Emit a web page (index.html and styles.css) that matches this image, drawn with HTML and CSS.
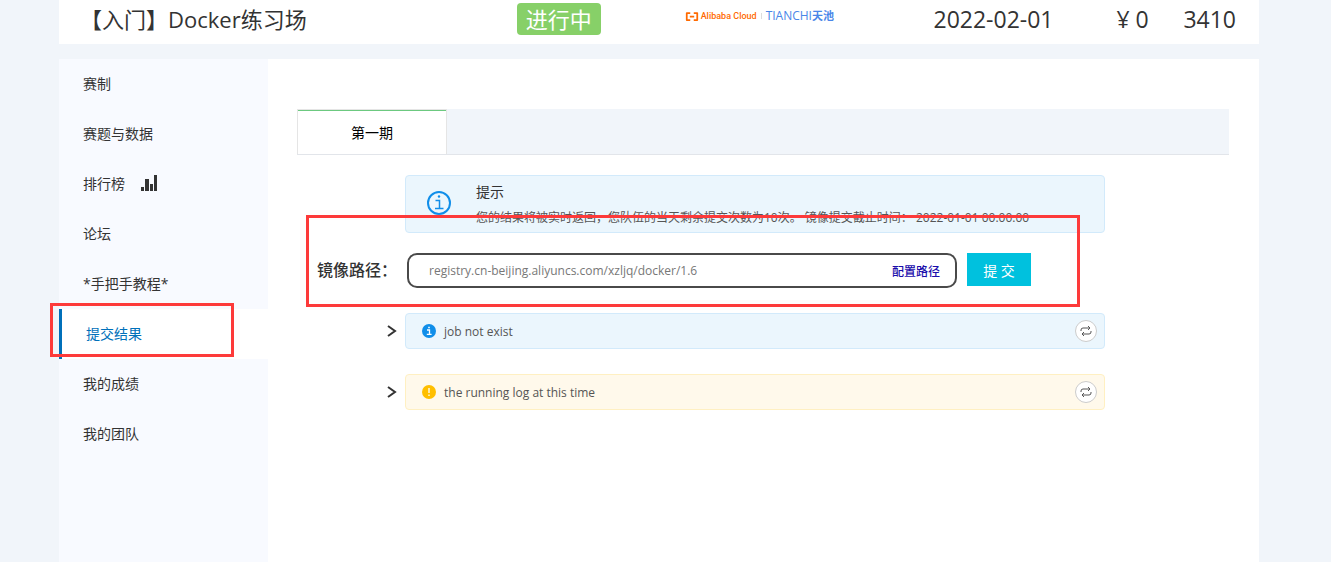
FILE: index.html
```html
<!DOCTYPE html>
<html lang="zh-CN">
  <head>
    <meta charset="UTF-8" />
    <meta name="viewport" content="width=device-width, initial-scale=1.0" />
    <title>【入门】Docker练习场</title>
    <link rel="stylesheet" href="styles.css">
  </head>
  <body>
    <header class="header">
      <h1>【入门】Docker练习场</h1>
      <span class="badge">进行中</span>
      <div class="logos">
        <svg class="logo-mark" viewBox="0 0 16 10" width="14" height="9" aria-hidden="true">
          <path d="M6 1H2v8h4M10 1h4v8h-4M5.500 5h5" fill="none" stroke="#ff6a00" stroke-width="2" stroke-linejoin="round" />
        </svg>
        <span class="logo-alibaba">Alibaba Cloud</span>
        <span class="logo-divider"></span>
        <span class="logo-tianchi">TIANCHI<b>天池</b></span>
      </div>
      <span class="figure">2022-02-01</span>
      <span class="figure">¥ 0</span>
      <span class="figure">3410</span>
    </header>

    <div class="page">
      <nav class="sidebar">
        <a href="#">赛制</a>
        <a href="#">赛题与数据</a>
        <a href="#">
          排行榜
          <svg class="rank-icon" viewBox="0 0 16 16" width="16" height="16" fill="#333" aria-hidden="true">
            <path d="M0 12h3v4H0zM4 4h4v12H4zM9 9h3v7H9zM13 0h3v16h-3z" />
          </svg>
        </a>
        <a href="#">论坛</a>
        <a href="#">*手把手教程*</a>
        <a href="#" class="active">提交结果<span class="mark mark-nav"></span></a>
        <a href="#">我的成绩</a>
        <a href="#">我的团队</a>
      </nav>

      <main class="content">
        <div class="tabs">
          <button type="button" class="tab">第一期</button>
        </div>

        <div class="tip">
          <svg class="tip-icon" viewBox="0 0 26 26" width="26" height="26" fill="none" stroke="#108ee9" stroke-width="2" aria-hidden="true">
            <circle cx="13" cy="13" r="11" />
            <path d="M9.500 10.500h4v8M9 18.500h8.500" stroke-width="1.500" />
            <circle cx="13" cy="6.500" r="1.200" fill="#108ee9" stroke="none" />
          </svg>
          <div>
            <h2>提示</h2>
            <p>您的结果将被实时返回，您队伍的当天剩余提交次数为10次。 镜像提交截止时间： 2022-01-01 00:00:00</p>
          </div>
        </div>

        <form class="submit-form">
          <label for="imagePath">镜像路径：</label>
          <div class="path-box">
            <input type="text" id="imagePath" value="registry.cn-beijing.aliyuncs.com/xzljq/docker/1.6" />
            <a href="#">配置路径</a>
          </div>
          <button type="button" class="btn-submit">提 交</button>
          <span class="mark mark-form"></span>
        </form>

        <div class="log">
          <button type="button" class="btn-expand" aria-label="展开">
            <svg viewBox="0 0 10 12" width="10" height="12" fill="none" stroke="#333" stroke-width="2">
              <path d="M1 1l7 5-7 5" />
            </svg>
          </button>
          <div class="log-bar info">
            <svg viewBox="0 0 14 14" width="14" height="14" aria-hidden="true">
              <circle cx="7" cy="7" r="7" fill="#108ee9" />
              <path d="M5 6h2.500v4M4.800 10.300h4.800M6.200 3.500h1.600" fill="none" stroke="#fff" stroke-width="1.300" />
            </svg>
            <span>job not exist</span>
            <button type="button" class="btn-refresh" aria-label="刷新">
              <svg viewBox="0 0 12 12" width="12" height="12" fill="none" stroke="#555">
                <path d="M1 6V5q0-2 2-2h7M8 1l2 2-2 2M11 6v1q0 2-2 2H2M4 7L2 9l2 2" />
              </svg>
            </button>
          </div>
        </div>

        <div class="log">
          <button type="button" class="btn-expand" aria-label="展开">
            <svg viewBox="0 0 10 12" width="10" height="12" fill="none" stroke="#333" stroke-width="2">
              <path d="M1 1l7 5-7 5" />
            </svg>
          </button>
          <div class="log-bar warning">
            <svg viewBox="0 0 14 14" width="14" height="14" aria-hidden="true">
              <circle cx="7" cy="7" r="7" fill="#ffbf00" />
              <path d="M7 3v5M7 9.500v1.500" fill="none" stroke="#fff" stroke-width="1.300" />
            </svg>
            <span>the running log at this time</span>
            <button type="button" class="btn-refresh" aria-label="刷新">
              <svg viewBox="0 0 12 12" width="12" height="12" fill="none" stroke="#555">
                <path d="M1 6V5q0-2 2-2h7M8 1l2 2-2 2M11 6v1q0 2-2 2H2M4 7L2 9l2 2" />
              </svg>
            </button>
          </div>
        </div>
      </main>
    </div>
  </body>
</html>
```

FILE: styles.css
```css
* {
  margin: 0;
  padding: 0;
  box-sizing: border-box;
}
body {
  display: flex;
  flex-direction: column;
  align-items: center;
  gap: 15px;
  min-height: 100vh;
  padding-right: 13px;
  background: #f1f5fa;
  color: #333;
  font-family: "Open Sans", "Noto Sans CJK SC", sans-serif;
  font-size: 14px;
}
a {
  color: inherit;
  text-decoration: none;
}
button,
input {
  font: inherit;
  border: none;
  background: none;
}
button {
  cursor: pointer;
}
.header,
.page {
  width: 100%;
  max-width: 1200px;
  background: #fff;
}
.header {
  display: grid;
  grid-template-columns: 437fr 168fr 249fr 183fr 67fr 52fr;
  padding: 3px 23px 9px 21px;
  line-height: 32px;
  white-space: nowrap;
}
.header h1 {
  height: 32px;
  font-size: 22px;
  font-weight: 400;
}
.badge {
  justify-self: start;
  height: 32px;
  padding: 0 9px;
  border-radius: 4px;
  background: #87d068;
  color: #fff;
  font-size: 22px;
}
.figure {
  height: 32px;
  font-size: 23px;
}
.logos {
  display: flex;
  align-items: center;
  height: 26px;
}
.logo-mark {
  margin-right: 2px;
}
.logo-alibaba {
  color: #ff6a00;
  font-family: Roboto, sans-serif;
  font-size: 9px;
  font-weight: 500;
}
.logo-divider {
  width: 1px;
  height: 6px;
  margin: 0 4px;
  background: #ddd;
}
.logo-tianchi {
  color: #4a86e8;
  font-size: 12px;
}
.logo-tianchi b {
  font-size: 11px;
}
.page {
  display: flex;
  flex: 1;
}
.sidebar {
  flex: 0 0 209px;
  background: #f8faff;
}
.sidebar a {
  position: relative;
  display: flex;
  align-items: center;
  height: 50px;
  padding: 0 0 2px 24px;
}
.sidebar .active {
  border-left: 3px solid #0070ba;
  background: #fff;
  color: #0070ba;
}
.rank-icon {
  margin-left: 16px;
}
.mark {
  position: absolute;
  z-index: 1;
  border: 3px solid #fd3a3a;
  pointer-events: none;
}
.mark-nav {
  top: -6px;
  right: 34px;
  bottom: 2px;
  left: -12px;
}
.content {
  flex: 1;
  min-width: 0;
  padding: 50px 30px 30px 29px;
}
.tabs {
  height: 46px;
  margin-bottom: 20px;
  border-bottom: 1px solid #e2e5ea;
  background: #f1f5fa;
}
.tab {
  width: 150px;
  height: 45px;
  border: 1px solid #e5e5e5;
  border-bottom: none;
  background: #fff;
  box-shadow: inset 0 1px #6cc980;
  color: #000;
}
.tip {
  display: flex;
  gap: 24px;
  max-width: 700px;
  margin: 0 0 20px 108px;
  padding: 4px 20px;
  border: 1px solid #d2eafb;
  border-radius: 4px;
  background: #ebf6fd;
}
.tip-icon {
  flex: none;
  margin-top: 10px;
}
.tip h2 {
  margin-bottom: 4px;
  font-size: 14px;
  font-weight: 400;
  line-height: 24px;
}
.tip p {
  color: #555;
  font-size: 12px;
  line-height: 20px;
}
.submit-form {
  position: relative;
  display: flex;
  gap: 10px;
  max-width: 734px;
  height: 35px;
  margin-bottom: 25px;
  padding-left: 20px;
}
.submit-form label {
  flex: none;
  font-size: 16px;
  font-weight: 500;
  line-height: 35px;
}
.path-box {
  display: flex;
  flex: 1;
  align-items: center;
  min-width: 0;
  padding: 0 15px 0 20px;
  border: 2px solid #4a4a4a;
  border-radius: 10px;
}
.path-box input {
  flex: 1;
  min-width: 0;
  outline: none;
  color: #777;
  font-size: 12px;
}
.path-box a {
  color: #1a0dab;
  font-size: 12px;
  font-weight: 500;
}
.btn-submit {
  width: 64px;
  height: 33px;
  background: #00c1de;
  color: #fff;
}
.mark-form {
  top: -38px;
  right: -49px;
  bottom: -19px;
  left: 9px;
}
.log {
  display: flex;
  margin-bottom: 25px;
}
.btn-expand {
  display: flex;
  flex: 0 0 108px;
  align-items: center;
  justify-content: flex-end;
  padding-right: 8px;
}
.log-bar {
  display: flex;
  flex: 1;
  align-items: center;
  gap: 8px;
  max-width: 700px;
  height: 36px;
  padding: 0 7px 0 16px;
  border: 1px solid;
  border-radius: 4px;
  color: #555;
  font-size: 12px;
}
.log-bar.info {
  border-color: #d2eafb;
  background: #ebf6fd;
}
.log-bar.warning {
  border-color: #fff0c2;
  background: #fff9eb;
}
.btn-refresh {
  display: flex;
  align-items: center;
  justify-content: center;
  width: 22px;
  height: 22px;
  margin-left: auto;
  border: 1px solid #ccc;
  border-radius: 50%;
  background: #fff;
}
```
